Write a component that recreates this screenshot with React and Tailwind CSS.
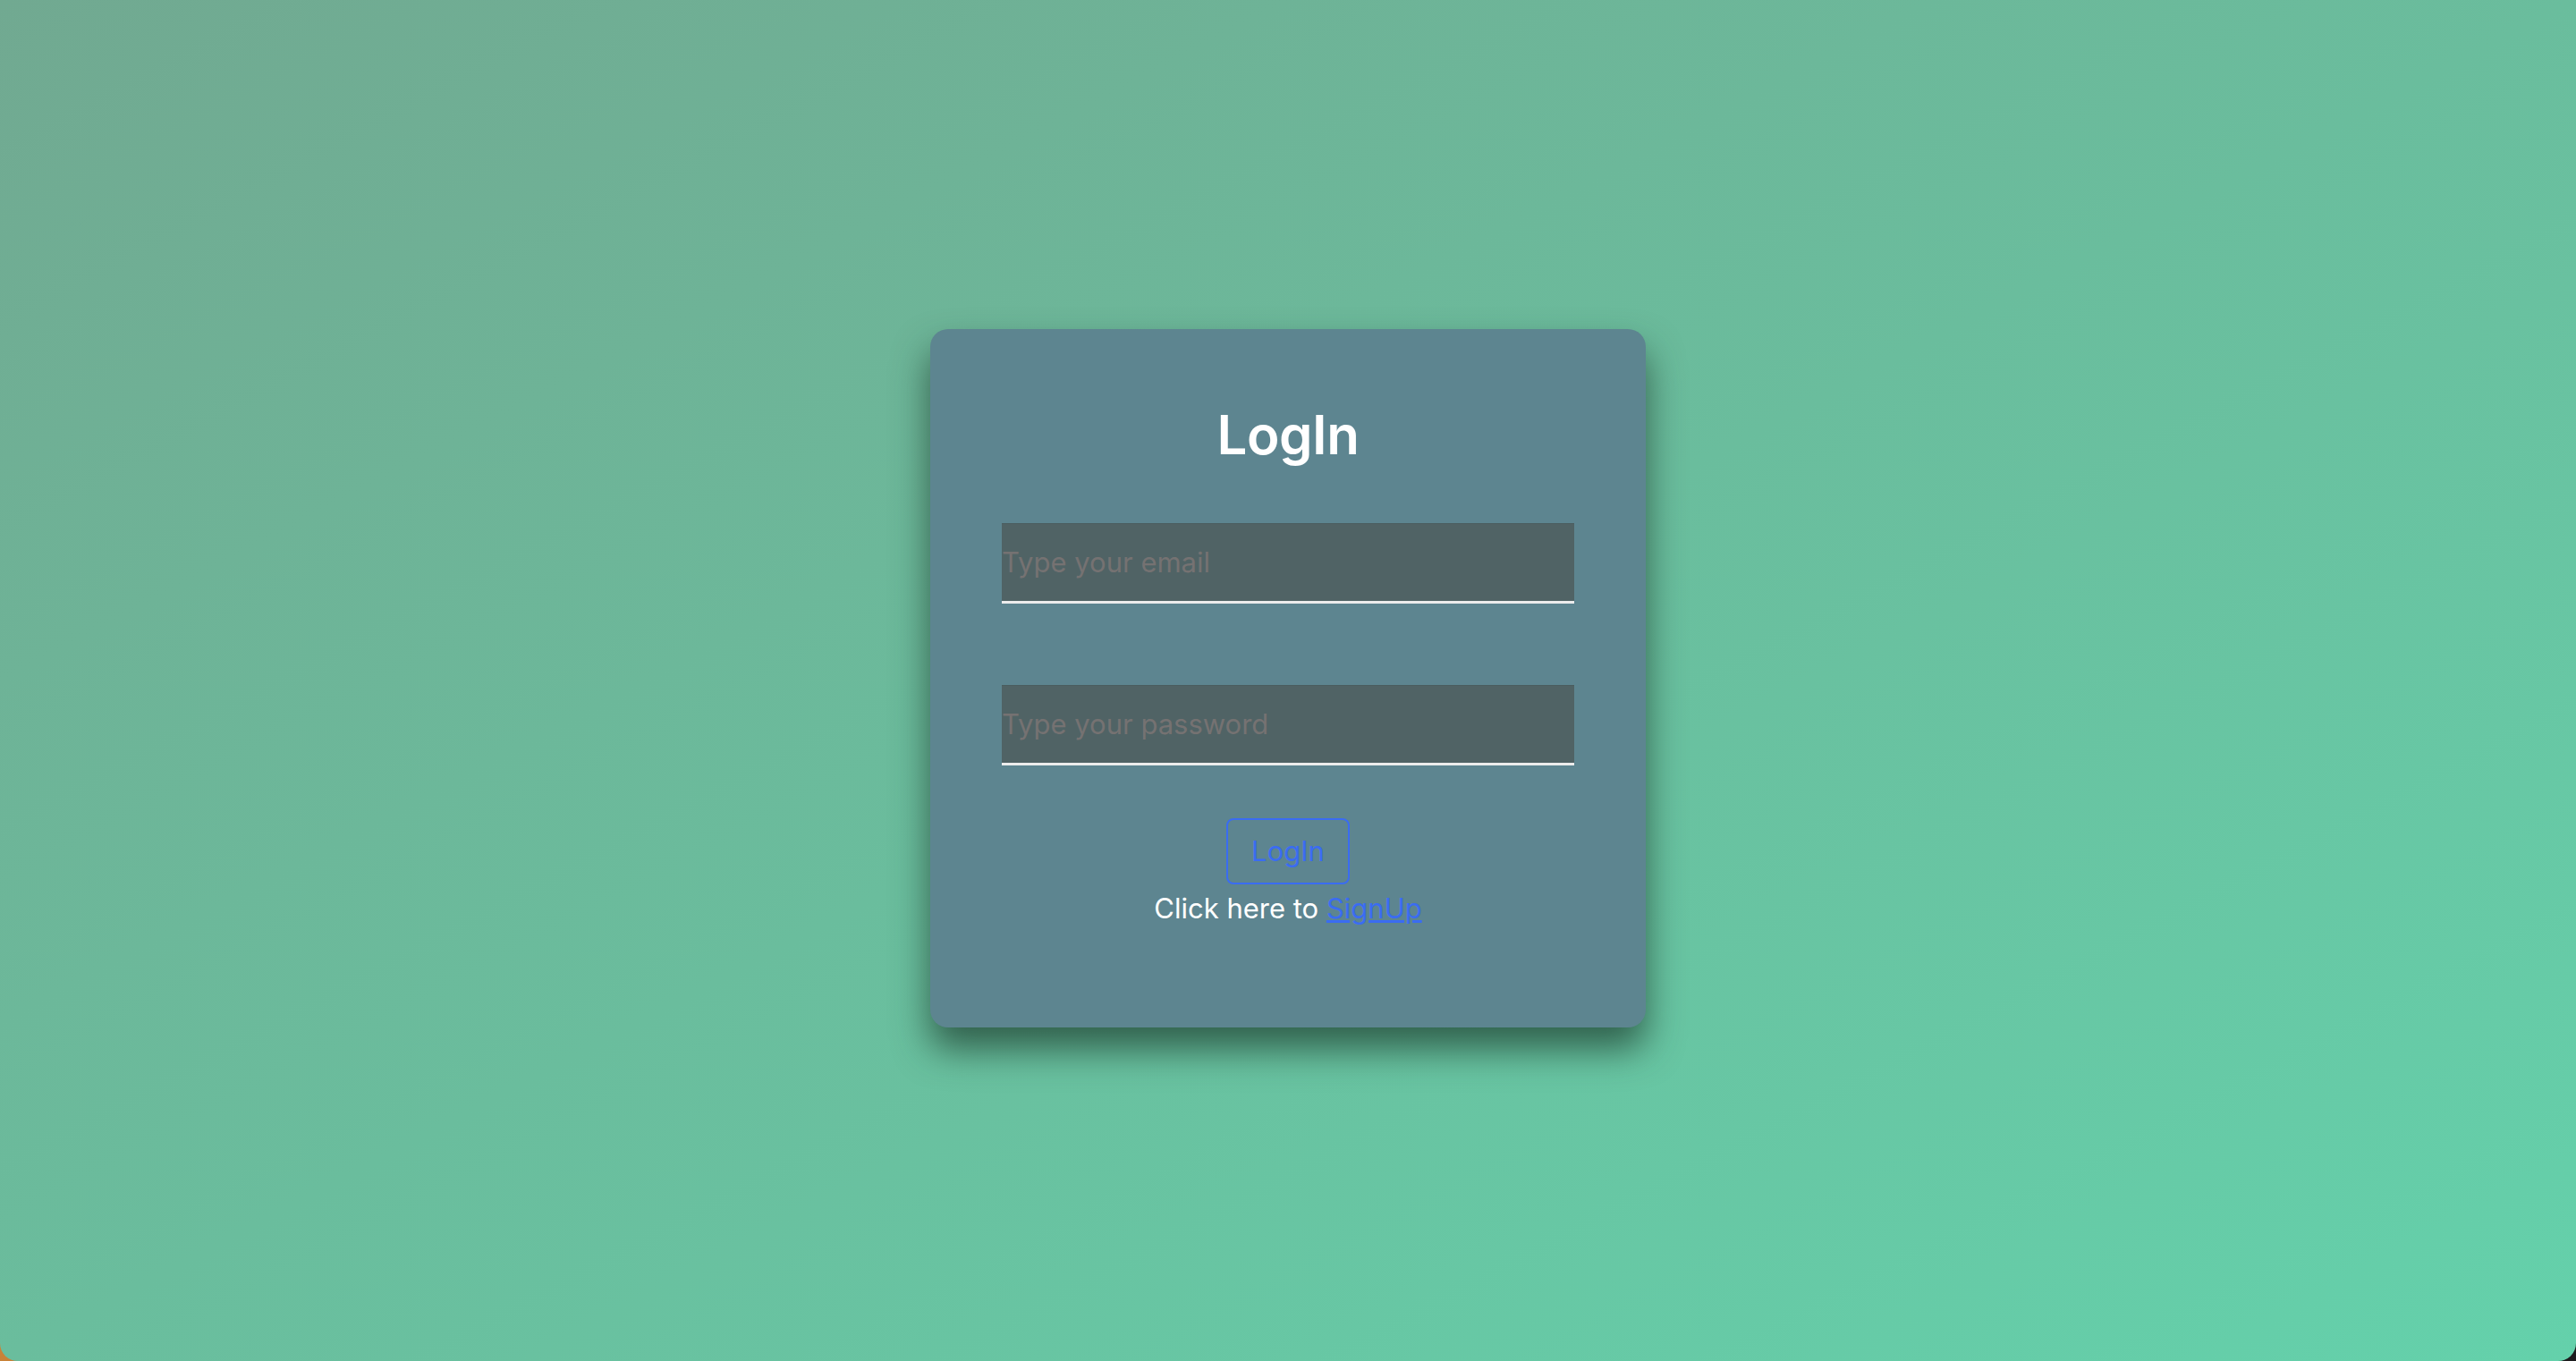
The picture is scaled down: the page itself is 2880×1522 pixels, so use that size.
export default function App() {
    return (
        <div className="bg-linear-to-r from-[#c98238] to-[#1c1c1e]">

            {/* PAGE */}
            <div
                className="min-h-[1522px] pb-[6px] rounded-b-[20px] bg-linear-to-br from-[#71a991] via-[#6abd9d] to-[#64d1ab] flex items-center justify-center"
                style={{ fontFamily: 'Inter, "Noto Sans", sans-serif' }}
            >

                {/* CARD */}
                <div className="w-[800px] bg-[#5d8590] rounded-[20px] shadow-[0_24px_40px_rgba(25,55,42,0.7)] px-[80px] pt-[82px] pb-[114px] flex flex-col items-center">

                    <h1 className="text-[60px] leading-[72px] font-semibold text-white tracking-[-0.5px]">
                        LogIn
                    </h1>

                    <input
                        type="email"
                        placeholder="Type your email"
                        className="mt-[63px] w-full h-[90px] bg-[#506365] border-t border-t-[#4a5d5f] border-b-[3px] border-b-[#ececec] outline-none text-[31px] text-white placeholder:text-[#757272]"
                    />

                    <input
                        type="password"
                        placeholder="Type your password"
                        className="mt-[91px] w-full h-[90px] bg-[#506365] border-t border-t-[#4a5d5f] border-b-[3px] border-b-[#ececec] outline-none text-[31px] text-white placeholder:text-[#757272]"
                    />

                    <button className="mt-[59px] h-[74px] px-[26px] border-2 border-[#3a6cf2] rounded-[8px] text-[31px] text-[#3a6cf2] leading-none">
                        LogIn
                    </button>

                    <p className="mt-[8px] text-[31px] leading-[38px] text-white">
                        Click here to{' '}
                        <a href="#" className="text-[#3a6cf2] underline">
                            SignUp
                        </a>
                    </p>

                </div>

            </div>

        </div>
    )
}
